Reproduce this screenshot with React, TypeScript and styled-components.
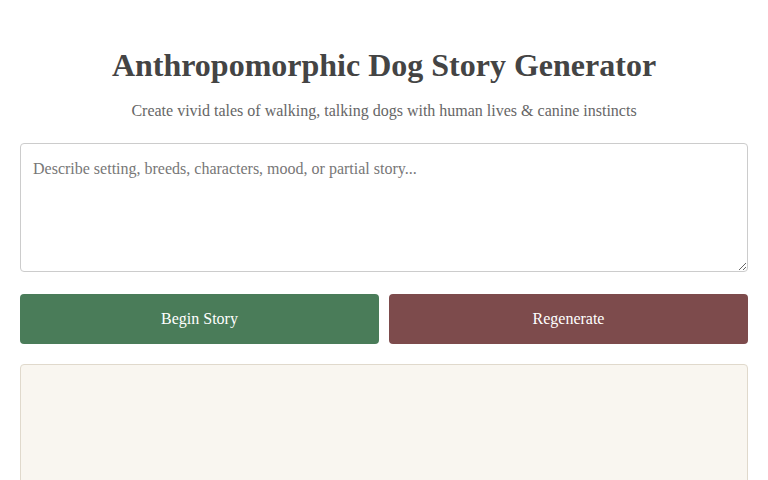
import React, { useState } from "react";
import styled, { createGlobalStyle } from "styled-components";

const GlobalStyle = createGlobalStyle`
  body {
    margin: 0;
    background: #ffffff;
    font-family: "Liberation Serif", "Times New Roman", serif;
  }
`;

const Page = styled.div`
  padding: 28px 20px 0;
  display: flex;
  flex-direction: column;
`;

const Title = styled.h1`
  margin: 19px 0 0;
  font-size: 32px;
  line-height: 37px;
  font-weight: bold;
  color: #444444;
  text-align: center;
`;

const Subtitle = styled.p`
  margin: 18px 0 0;
  font-size: 16px;
  line-height: 18px;
  color: #666666;
  text-align: center;
`;

const PromptInput = styled.textarea`
  margin-top: 23px;
  box-sizing: border-box;
  width: 100%;
  height: 129px;
  padding: 16px 12px 12px;
  border: 1px solid #cccccc;
  border-radius: 4px;
  font-family: "Liberation Serif", "Times New Roman", serif;
  font-size: 16px;
  color: #333333;
  resize: vertical;

  &::placeholder {
    color: #777777;
  }
`;

const ButtonRow = styled.div`
  margin-top: 22px;
  display: grid;
  grid-template-columns: 1fr 1fr;
  gap: 10px;
`;

const ActionButton = styled.button<{ $tone: "green" | "red" }>`
  height: 50px;
  border: none;
  border-radius: 4px;
  background: ${(p) => (p.$tone === "green" ? "#4a7c59" : "#7d4b4c")};
  color: #ffffff;
  font-family: "Liberation Serif", "Times New Roman", serif;
  font-size: 16px;
  cursor: pointer;
`;

const StoryOutput = styled.div`
  margin-top: 20px;
  box-sizing: border-box;
  min-height: 200px;
  padding: 16px;
  background: #f9f6f0;
  border: 1px solid #e0d9cc;
  border-radius: 4px;
`;

export default function App() {
  const [prompt, setPrompt] = useState("");

  return (
    <>
      <GlobalStyle />
      <Page>
        <Title>Anthropomorphic Dog Story Generator</Title>
        <Subtitle>
          Create vivid tales of walking, talking dogs with human lives &amp; canine instincts
        </Subtitle>
        <PromptInput
          value={prompt}
          onChange={(e) => setPrompt(e.target.value)}
          placeholder="Describe setting, breeds, characters, mood, or partial story..."
        />
        <ButtonRow>
          <ActionButton $tone="green">Begin Story</ActionButton>
          <ActionButton $tone="red">Regenerate</ActionButton>
        </ButtonRow>
        <StoryOutput />
      </Page>
    </>
  );
}
